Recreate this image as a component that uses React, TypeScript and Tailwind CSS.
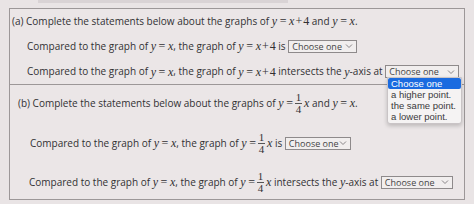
import React from "react";

const M = ({ children }: { children: React.ReactNode }) => (
  <span className="font-['Liberation_Serif',serif] italic text-[12px]">{children}</span>
);
const U = ({ children }: { children: React.ReactNode }) => (
  <span className="font-['Liberation_Serif',serif] not-italic text-[12px]">{children}</span>
);
const Plus4 = () => (
  <span className="font-['Liberation_Serif',serif] not-italic text-[12px]">
    <span className="mx-[1px]">+</span>4
  </span>
);

const Frac = () => (
  <span className="inline-flex flex-col items-center mx-[2px] font-['Liberation_Serif',serif] text-[11px] leading-[9px]">
    <span>1</span>
    <span className="block w-[7px] h-px bg-[#555] my-[1px]" />
    <span>4</span>
  </span>
);

const Chevron = () => (
  <svg width="8" height="6" viewBox="0 0 8 6" className="ml-auto">
    <path d="M1 1.5 L4 4.5 L7 1.5" fill="none" stroke="#8a8688" strokeWidth="1" />
  </svg>
);

const Select = ({ w }: { w: string }) => (
  <span
    className={`inline-flex items-center h-[13px] border border-[#8e8a8b] bg-[#f1eeee] px-[3px] text-[9px] leading-none text-[#444] whitespace-nowrap ${w}`}
  >
    Choose one
    <Chevron />
  </span>
);

export default function App() {
  return (
    <div className="relative w-[474px] h-[204px] overflow-hidden bg-[#e9e4e5] font-['Open_Sans',sans-serif] text-[10px] text-[#323133] whitespace-nowrap">
      <div className="ml-[38px] w-[250px] h-[3px] bg-[#d9d3d5]" />
      <div className="ml-[9px] mt-[5px] w-[456px] border border-[#9c9798] bg-[#ebe6e7]">
        <div className="flex flex-col">
          <div className="h-[24px] flex items-center pl-[2px]">
            (a) Complete the statements below about the graphs of&nbsp;
            <M>y</M>&nbsp;<U>=</U>&nbsp;<M>x</M><Plus4 />&nbsp;and&nbsp;<M>y</M>&nbsp;<U>=</U>&nbsp;<M>x</M>.
          </div>
          <div className="h-[26px] flex items-center pl-[17px]">
            Compared to the graph of&nbsp;<M>y</M>&nbsp;<U>=</U>&nbsp;<M>x</M>, the graph of&nbsp;
            <M>y</M>&nbsp;<U>=</U>&nbsp;<M>x</M><Plus4 />&nbsp;is&nbsp;
            <Select w="w-[69px]" />
          </div>
          <div className="h-[25px] flex items-center pl-[17px]">
            Compared to the graph of&nbsp;<M>y</M>&nbsp;<U>=</U>&nbsp;<M>x</M>, the graph of&nbsp;
            <M>y</M>&nbsp;<U>=</U>&nbsp;<M>x</M><Plus4 />&nbsp;intersects the&nbsp;<M>y</M>-axis at&nbsp;
            <Select w="w-[74px]" />
          </div>
        </div>
        <div className="flex flex-col border-t border-[#9c9798]">
          <div className="h-[36px] flex items-center pl-[8px]">
            (b) Complete the statements below about the graphs of&nbsp;
            <M>y</M>&nbsp;<U>=</U>
            <Frac />
            <M>x</M>&nbsp;and&nbsp;<M>y</M>&nbsp;<U>=</U>&nbsp;<M>x</M>.
          </div>
          <div className="h-[44px] flex items-center pl-[20px]">
            Compared to the graph of&nbsp;<M>y</M>&nbsp;<U>=</U>&nbsp;<M>x</M>, the graph of&nbsp;
            <M>y</M>&nbsp;<U>=</U>
            <Frac />
            <M>x</M>&nbsp;is&nbsp;
            <Select w="w-[66px]" />
          </div>
          <div className="h-[34px] flex items-center pl-[19px]">
            Compared to the graph of&nbsp;<M>y</M>&nbsp;<U>=</U>&nbsp;<M>x</M>, the graph of&nbsp;
            <M>y</M>&nbsp;<U>=</U>
            <Frac />
            <M>x</M>&nbsp;intersects the&nbsp;<M>y</M>-axis at&nbsp;
            <Select w="w-[72px]" />
          </div>
        </div>
      </div>
      <div className="absolute left-[387px] top-[77px] w-[75px] rounded-b-[3px] border border-[#c9c4c6] bg-[#f5f3f3] shadow-[0_2px_4px_rgba(0,0,0,0.2)] font-['Liberation_Sans',sans-serif] text-[9.5px] leading-[11px] text-[#3a393b] pb-[1px] whitespace-nowrap">
        <div className="bg-[#1a6be0] text-white px-[3px] h-[11px] rounded-[2px]">Choose one</div>
        <div className="px-[3px] h-[11px]">a higher point.</div>
        <div className="px-[3px] h-[11px]">the same point.</div>
        <div className="px-[3px] h-[11px]">a lower point.</div>
      </div>
    </div>
  );
}
